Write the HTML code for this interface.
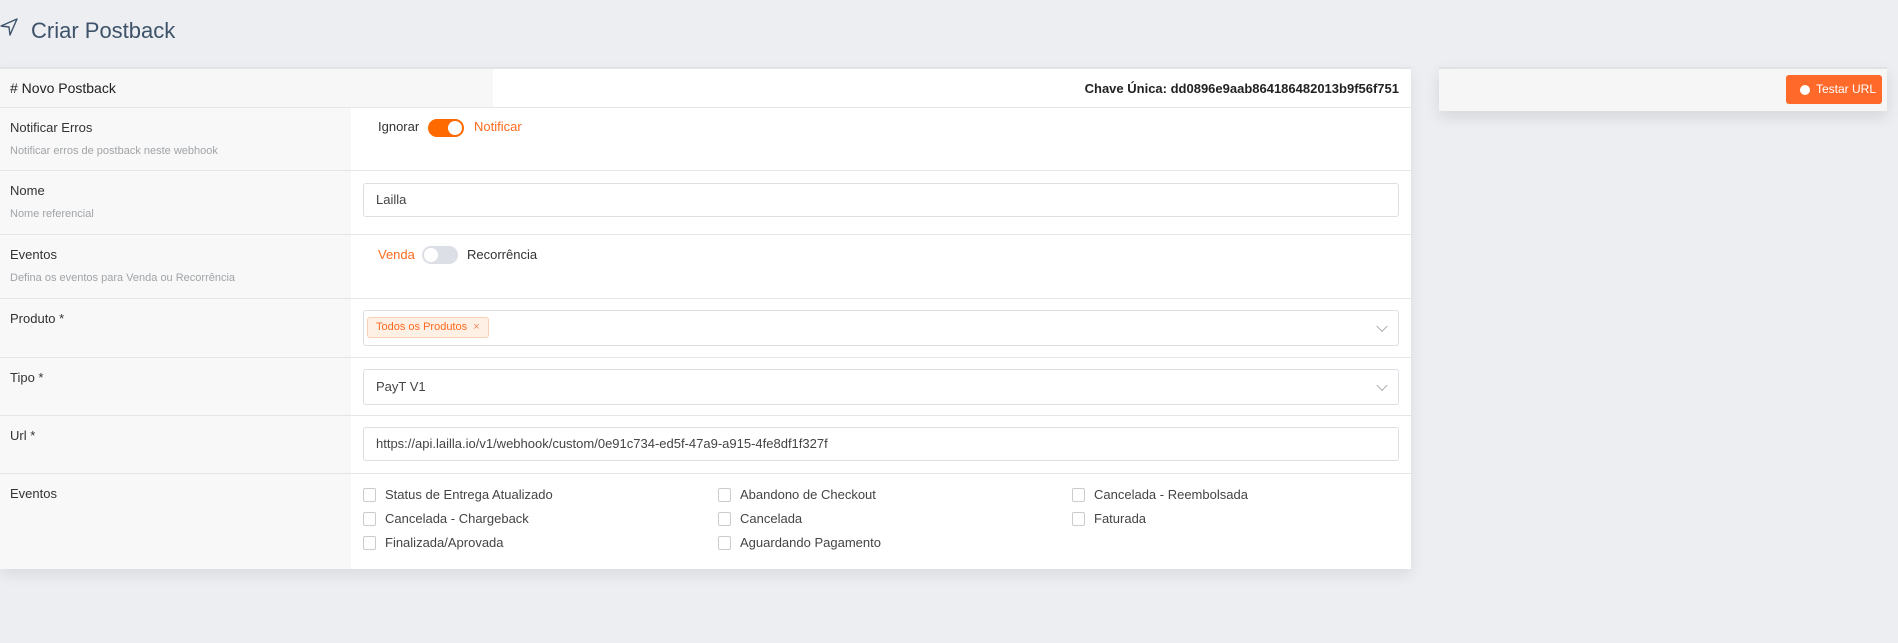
<!DOCTYPE html>
<html><head><meta charset="utf-8"><style>
*{box-sizing:border-box;margin:0;padding:0}
body{width:1898px;height:643px;background:#eceef2;font-family:"Liberation Sans",sans-serif;color:#333;position:relative;overflow:hidden}
.abs{position:absolute}
.title{left:31px;top:18px;font-size:22px;color:#3e5369}
.card{left:0;top:67px;width:1411px;height:502px;background:#fff;box-shadow:0 6px 14px rgba(0,0,0,.08);border-top:2px solid #e2e4e8}
.row{position:absolute;left:0;width:1411px;border-bottom:1px solid #e3e5e8}
.lbg{position:absolute;left:0;top:0;bottom:0;width:351px;background:#f8f8f8}
.lab{position:absolute;left:10px;top:12px;font-size:13px;color:#333}
.sub{position:absolute;left:10px;top:37px;font-size:11px;color:#a0a4a8}
.inp{position:absolute;left:363px;width:1036px;border:1px solid #dcdfe3;border-radius:3px;background:#fff;font-size:13px;color:#444;padding-left:12px}
.chev{position:absolute;right:12px;top:50%;width:8px;height:8px;border-right:1px solid #aaa;border-bottom:1px solid #aaa;transform:translateY(-70%) rotate(45deg)}
.tog{position:absolute;width:36px;height:18px;border-radius:9px}
.knob{position:absolute;top:2px;width:14px;height:14px;border-radius:50%;background:#fff}
.cb{position:absolute;font-size:13px;color:#444}
.cb:before{content:"";position:absolute;left:-22px;top:1px;width:11px;height:12px;border:1px solid #ccc;border-radius:2px}
.or{color:#ff6a1f}
</style></head><body>
<svg class="abs" style="left:0;top:16px" width="20" height="22" viewBox="0 0 20 22"><path d="M1 10 L17 3 L10 19 L9 11 Z" fill="none" stroke="#3e5369" stroke-width="1.4" stroke-linejoin="round"/></svg>
<div class="abs title">Criar Postback</div>

<div class="abs card">
 <div class="row" style="top:0;height:39px">
  <div style="position:absolute;left:0;top:0;bottom:0;width:493px;background:#f7f7f7"></div>
  <div class="lab" style="top:11px;font-size:14px;color:#222">#&nbsp;Novo Postback</div>
  <div style="position:absolute;right:12px;top:12px;font-size:13px;font-weight:bold;color:#222">Chave Única: dd0896e9aab864186482013b9f56f751</div>
 </div>
 <div class="row" style="top:39px;height:63px"><div class="lbg"></div>
  <div class="lab">Notificar Erros</div><div class="sub">Notificar erros de postback neste webhook</div>
  <div class="abs" style="left:378px;top:11px;font-size:13px">Ignorar</div>
  <div class="tog" style="left:428px;top:11px;background:#ff6a00"><div class="knob" style="left:20px"></div></div>
  <div class="abs or" style="left:474px;top:11px;font-size:13px">Notificar</div>
 </div>
 <div class="row" style="top:102px;height:64px"><div class="lbg"></div>
  <div class="lab">Nome</div><div class="sub">Nome referencial</div>
  <div class="inp" style="top:12px;height:34px;line-height:32px">Lailla</div>
 </div>
 <div class="row" style="top:166px;height:64px"><div class="lbg"></div>
  <div class="lab">Eventos</div><div class="sub">Defina os eventos para Venda ou Recorrência</div>
  <div class="abs or" style="left:378px;top:12px;font-size:13px">Venda</div>
  <div class="tog" style="left:422px;top:11px;background:#dcdfe5"><div class="knob" style="left:2px"></div></div>
  <div class="abs" style="left:467px;top:12px;font-size:13px">Recorrência</div>
 </div>
 <div class="row" style="top:230px;height:59px"><div class="lbg"></div>
  <div class="lab">Produto *</div>
  <div class="inp" style="top:11px;height:36px"><div style="position:absolute;left:3px;top:6px;height:21px;padding:0 8px;background:#fff0e6;border:1px solid #fbd0b4;border-radius:3px;font-size:11px;line-height:19px;color:#ff6a1f">Todos os Produtos &nbsp;<span style="color:#f08a5a">×</span></div><div class="chev"></div></div>
 </div>
 <div class="row" style="top:289px;height:58px"><div class="lbg"></div>
  <div class="lab">Tipo *</div>
  <div class="inp" style="top:11px;height:36px;line-height:34px">PayT V1<div class="chev"></div></div>
 </div>
 <div class="row" style="top:347px;height:58px"><div class="lbg"></div>
  <div class="lab">Url *</div>
  <div class="inp" style="top:11px;height:34px;line-height:32px">https://api.lailla.io/v1/webhook/custom/0e91c734-ed5f-47a9-a915-4fe8df1f327f</div>
 </div>
 <div class="row" style="top:405px;height:95px;border:none"><div class="lbg"></div>
  <div class="lab">Eventos</div>
  <div class="cb" style="left:385px;top:13px">Status de Entrega Atualizado</div>
  <div class="cb" style="left:385px;top:37px">Cancelada - Chargeback</div>
  <div class="cb" style="left:385px;top:61px">Finalizada/Aprovada</div>
  <div class="cb" style="left:740px;top:13px">Abandono de Checkout</div>
  <div class="cb" style="left:740px;top:37px">Cancelada</div>
  <div class="cb" style="left:740px;top:61px">Aguardando Pagamento</div>
  <div class="cb" style="left:1094px;top:13px">Cancelada - Reembolsada</div>
  <div class="cb" style="left:1094px;top:37px">Faturada</div>
 </div>
</div>

<div class="abs" style="left:1439px;top:67px;width:448px;height:44px;background:#f6f6f6;border-top:2px solid #e0e2e6;box-shadow:0 6px 14px rgba(0,0,0,.1)">
 <div class="abs" style="left:347px;top:6px;width:96px;height:29px;background:#ff6a2b;border-radius:3px;color:#fff;font-size:12px;line-height:29px;padding-left:30px">Testar URL
  <div class="abs" style="left:14px;top:10px;width:10px;height:10px;border-radius:50%;background:#fff"></div></div>
</div>
</body></html>
